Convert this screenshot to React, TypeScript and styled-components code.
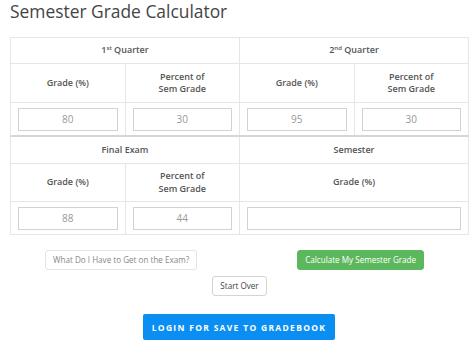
import React from "react";
import styled, { createGlobalStyle } from "styled-components";

const Global = createGlobalStyle`
  html, body { margin: 0; padding: 0; background: #fff; }
  body { font-family: "Open Sans", "Noto Sans", Arial, sans-serif; color: #555; }
  * { box-sizing: border-box; }
`;

const Page = styled.div`
  width: 474px;
  height: 348px;
  overflow: hidden;
  padding: 0 5px 0 10px;
`;

const Title = styled.h1`
  margin: 0 0 15px 0;
  font-size: 17.4px;
  line-height: 22px;
  font-weight: 400;
  color: #444;
`;

const Grid = styled.div<{ $last?: boolean }>`
  display: grid;
  width: 459px;
  grid-template-columns: repeat(4, 1fr);
  border-top: ${(p) => (p.$last ? "0" : "1px solid #e6e6e6")};
  border-left: 1px solid #e6e6e6;
  border-bottom: ${(p) => (p.$last ? "1px solid #e6e6e6" : "2px solid #d6d6d6")};
`;

const Cell = styled.div<{ $span?: number; $h: number; $noBottom?: boolean }>`
  grid-column: span ${(p) => p.$span ?? 1};
  height: ${(p) => p.$h}px;
  border-right: 1px solid #e6e6e6;
  border-bottom: ${(p) => (p.$noBottom ? "0" : "1px solid #e6e6e6")};
  display: flex;
  align-items: center;
  justify-content: center;
  text-align: center;
  font-size: 9px;
  line-height: 12.5px;
  font-weight: 600;
  color: #555;
`;

const InputCell = styled(Cell)`
  padding: 0 7px;
`;

const Field = styled.input`
  width: 100%;
  height: 23px;
  border: 1px solid #d2d2d2;
  border-radius: 0;
  text-align: center;
  font-family: "Open Sans", Arial, sans-serif;
  font-size: 10px;
  color: #999;
  outline: none;
  background: #fff;
`;

const Sup = styled.sup`
  font-size: 6px;
  line-height: 0;
  vertical-align: 3px;
`;

const ButtonRow = styled.div`
  display: flex;
  gap: 100px;
  padding-left: 35px;
  margin-top: 15px;
`;

const CenterRow = styled.div<{ $mt: number }>`
  display: flex;
  justify-content: center;
  width: 459px;
  margin-top: ${(p) => p.$mt}px;
`;

const Button = styled.button<{ $variant?: "default" | "green" | "light" }>`
  height: 20px;
  padding: 0 7px;
  border-radius: 3px;
  font-family: "Open Sans", Arial, sans-serif;
  font-size: 8.1px;
  line-height: 18px;
  cursor: pointer;
  border: 1px solid
    ${(p) => (p.$variant === "green" ? "#5cb85c" : p.$variant === "light" ? "#e4e4e4" : "#d4d4d4")};
  background: ${(p) => (p.$variant === "green" ? "#5cb85c" : "#fff")};
  color: ${(p) => (p.$variant === "green" ? "#fff" : p.$variant === "light" ? "#888" : "#444")};
`;

const LoginButton = styled.button`
  width: 192px;
  height: 26px;
  border: 0;
  border-radius: 2px;
  background: #0a8ef2;
  color: #fff;
  font-family: "Open Sans", Arial, sans-serif;
  font-size: 8.5px;
  font-weight: 700;
  letter-spacing: 1.3px;
  text-transform: uppercase;
  cursor: pointer;
  margin-left: -1px;
`;

const Two = ({ a, b }: { a: string; b: string }) => (
  <span>
    {a}
    <br />
    {b}
  </span>
);

export default function App() {
  return (
    <>
      <Global />
      <Page>
        <Title>Semester Grade Calculator</Title>
        <Grid>
          <Cell $span={2} $h={26}>
            <span>
              1<Sup>st</Sup> Quarter
            </span>
          </Cell>
          <Cell $span={2} $h={26}>
            <span>
              2<Sup>nd</Sup> Quarter
            </span>
          </Cell>
          <Cell $h={39}>Grade (%)</Cell>
          <Cell $h={39}>
            <Two a="Percent of" b="Sem Grade" />
          </Cell>
          <Cell $h={39}>Grade (%)</Cell>
          <Cell $h={39}>
            <Two a="Percent of" b="Sem Grade" />
          </Cell>
          <InputCell $h={32} $noBottom>
            <Field defaultValue="80" />
          </InputCell>
          <InputCell $h={32} $noBottom>
            <Field defaultValue="30" />
          </InputCell>
          <InputCell $h={32} $noBottom>
            <Field defaultValue="95" />
          </InputCell>
          <InputCell $h={32} $noBottom>
            <Field defaultValue="30" />
          </InputCell>
        </Grid>
        <Grid $last>
          <Cell $span={2} $h={27}>Final Exam</Cell>
          <Cell $span={2} $h={27}>Semester</Cell>
          <Cell $h={38}>Grade (%)</Cell>
          <Cell $h={38}>
            <Two a="Percent of" b="Sem Grade" />
          </Cell>
          <Cell $span={2} $h={38}>Grade (%)</Cell>
          <InputCell $h={32} $noBottom>
            <Field defaultValue="88" />
          </InputCell>
          <InputCell $h={32} $noBottom>
            <Field defaultValue="44" />
          </InputCell>
          <InputCell $span={2} $h={32} $noBottom>
            <Field defaultValue="" />
          </InputCell>
        </Grid>
        <ButtonRow>
          <Button $variant="light">What Do I Have to Get on the Exam?</Button>
          <Button $variant="green">Calculate My Semester Grade</Button>
        </ButtonRow>
        <CenterRow $mt={6}>
          <Button>Start Over</Button>
        </CenterRow>
        <CenterRow $mt={18}>
          <LoginButton>Login for save to Gradebook</LoginButton>
        </CenterRow>
      </Page>
    </>
  );
}
